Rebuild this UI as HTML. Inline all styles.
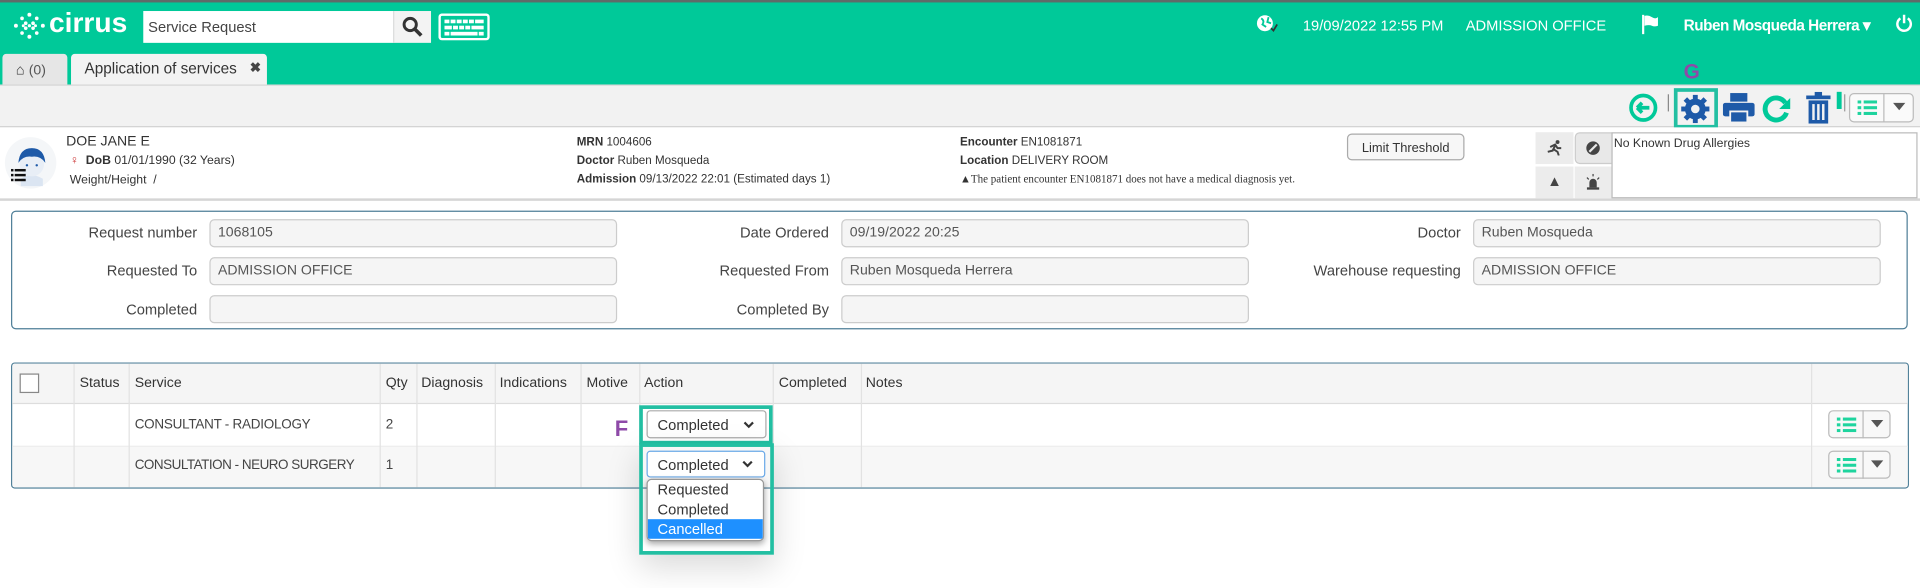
<!DOCTYPE html>
<html><head><meta charset="utf-8">
<style>
*{box-sizing:border-box;margin:0;padding:0}
html,body{width:1920px;height:588px;overflow:hidden;background:#fff}
#w{position:absolute;left:0;top:0;width:1568px;height:480px;transform:scale(1.22449);transform-origin:0 0;font-family:"Liberation Sans",sans-serif;font-size:12px;color:#333}
.a{position:absolute;white-space:nowrap}
.hdr{left:0;top:0;width:1568px;height:69px;background:#00c999;border-top:2px solid #5f6b68}
.wt{color:#fff}
.inp{background:#f5f5f5;border:1px solid #ccc;border-radius:4px;height:23px;padding:4px 6px;font-size:11.5px;color:#555}
.lbl{text-align:right;width:150px;font-size:12px;color:#444}
.col{position:absolute;top:0;height:100%;border-left:1px solid #e2e2e2}
.sel{background:#fff;border:1px solid #aaa;border-radius:3px;font-size:12px;color:#333;padding:4px 8px}
.rb{width:51px;height:23px;border:1px solid #bbb;border-radius:4px;background:#f8f8f8}
</style></head><body><div id="w">
<div class="a hdr"></div>
<svg class="a" style="left:11px;top:10px" width="26" height="22" viewBox="0 0 26 22" fill="#fff">
<circle cx="13" cy="2" r="1.6"/><circle cx="13" cy="20" r="1.6"/><circle cx="2" cy="11" r="1.6"/><circle cx="24" cy="11" r="1.6"/>
<circle cx="7" cy="5" r="1.5"/><circle cx="19" cy="5" r="1.5"/><circle cx="7" cy="17" r="1.5"/><circle cx="19" cy="17" r="1.5"/>
<circle cx="10" cy="9" r="1.5"/><circle cx="16" cy="9" r="1.5"/><circle cx="10" cy="13" r="1.5"/><circle cx="16" cy="13" r="1.5"/><circle cx="13" cy="11" r="1.3"/><circle cx="8" cy="11" r="1.2"/><circle cx="18" cy="11" r="1.2"/></svg>
<div class="a wt" style="left:40px;top:5px;font-size:23px;font-weight:bold">cirrus</div>
<div class="a" style="left:117px;top:9px;width:204px;height:26px;background:#fff;font-size:12px;padding:6px 4px;color:#444">Service Request</div>
<div class="a" style="left:321px;top:9px;width:31px;height:26px;background:#f3f3f3;border-left:1px solid #ddd"></div>
<svg class="a" style="left:328px;top:13px" width="18" height="18" viewBox="0 0 18 18"><circle cx="7" cy="7" r="5" fill="none" stroke="#333" stroke-width="2.4"/><path d="M11 11l5 5" stroke="#333" stroke-width="3"/></svg>
<svg class="a" style="left:358px;top:11px" width="42" height="22" viewBox="0 0 42 22"><rect x="1" y="1" width="40" height="20" rx="2" fill="none" stroke="#fff" stroke-width="2"/><g fill="#fff"><rect x="5" y="5" width="4" height="3"/><rect x="10" y="5" width="4" height="3"/><rect x="15" y="5" width="4" height="3"/><rect x="20" y="5" width="4" height="3"/><rect x="25" y="5" width="4" height="3"/><rect x="30" y="5" width="7" height="3"/><rect x="5" y="10" width="6" height="3"/><rect x="12" y="10" width="4" height="3"/><rect x="17" y="10" width="4" height="3"/><rect x="22" y="10" width="4" height="3"/><rect x="27" y="10" width="10" height="3"/><rect x="5" y="15" width="4" height="3"/><rect x="10" y="15" width="22" height="3"/><rect x="33" y="15" width="4" height="3"/></g></svg>
<svg class="a" style="left:1026px;top:12px" width="18" height="16" viewBox="0 0 18 16"><circle cx="7" cy="7" r="6.5" fill="#fff"/><path d="M4 3q3 2 1 5l3 2M10 2l-1 4 3 1" stroke="#00c999" stroke-width="1.5" fill="none"/><path d="M12 11l2 2 3-5" stroke="#333" stroke-width="1.4" fill="none"/></svg>
<div class="a wt" style="left:1064px;top:14px;font-size:12px">19/09/2022 12:55 PM</div>
<div class="a wt" style="left:1197px;top:14px;font-size:12px">ADMISSION OFFICE</div>
<svg class="a" style="left:1341px;top:12px" width="14" height="16" viewBox="0 0 14 16"><rect x="0" y="0" width="1.8" height="16" fill="#fff"/><path d="M2 1q3-1 6 1t5 0v7q-3 1-5 0t-6 0z" fill="#fff"/></svg>
<div class="a wt" style="left:1375px;top:13px;font-size:12.5px;font-weight:bold;letter-spacing:-0.4px">Ruben Mosqueda Herrera ▾</div>
<svg class="a" style="left:1548px;top:11px" width="14" height="16" viewBox="0 0 14 16"><path d="M4 4a5.5 5.5 0 1 0 6 0" fill="none" stroke="#fff" stroke-width="2"/><path d="M7 1v7" stroke="#fff" stroke-width="2"/></svg>
<div class="a" style="left:2px;top:44px;width:53px;height:25px;background:#e6e6e6;border-radius:3px 3px 0 0;padding:6px 0 0 11px;color:#555;font-size:11.5px"><span style="font-size:12px;color:#333">&#8962;</span> (0)</div>
<div class="a" style="left:58px;top:44px;width:160px;height:25px;background:#f3f3f3;border-radius:3px 3px 0 0;padding:5px 0 0 11px;color:#333;font-size:12.5px">Application of services<span style="position:absolute;left:146px;top:5px;font-size:11px;color:#444;font-weight:bold">✖</span></div>
<div class="a" style="left:0;top:69px;width:1568px;height:35px;background:#f2f2f2;border-top:1px solid #d5d5d5;border-bottom:1px solid #d0d0d0"></div>
<div class="a" style="left:1375px;top:49px;color:#8e4aa8;font-weight:bold;font-size:17px">G</div>
<svg class="a" style="left:1330px;top:76px" width="24" height="24" viewBox="0 0 24 24"><circle cx="12" cy="12" r="10" fill="none" stroke="#00c999" stroke-width="3"/><path d="M7 12h10M7 12l4-4M7 12l4 4" stroke="#00c999" stroke-width="3" fill="none"/></svg>
<div class="a" style="left:1362px;top:77px;width:1px;height:14px;background:#888"></div>
<div class="a" style="left:1367px;top:72px;width:36px;height:33px;border:3px solid #22bfa2"></div>
<svg class="a" style="left:1372px;top:77px" width="25" height="24" viewBox="0 0 24 24"><circle cx="12" cy="12" r="8.5" fill="#1e5aa8"/><g fill="#1e5aa8"><rect x="10" y="0.5" width="4" height="5"/><rect x="10" y="18.5" width="4" height="5"/><rect x="0.5" y="10" width="5" height="4"/><rect x="18.5" y="10" width="5" height="4"/><rect x="10" y="0.5" width="4" height="5" transform="rotate(45 12 12)"/><rect x="10" y="18.5" width="4" height="5" transform="rotate(45 12 12)"/><rect x="0.5" y="10" width="5" height="4" transform="rotate(45 12 12)"/><rect x="18.5" y="10" width="5" height="4" transform="rotate(45 12 12)"/></g><circle cx="12" cy="12" r="3.5" fill="#f2f2f2"/></svg>
<svg class="a" style="left:1407px;top:76px" width="26" height="24" viewBox="0 0 26 24"><rect x="6" y="0" width="14" height="7" fill="#1e5aa8"/><rect x="0" y="8" width="26" height="11" rx="2" fill="#1e5aa8"/><rect x="6" y="15" width="14" height="9" fill="#1e5aa8" stroke="#f2f2f2" stroke-width="1.5"/></svg>
<svg class="a" style="left:1439px;top:76px" width="24" height="25" viewBox="0 0 24 25"><path d="M19 8A9 9 0 1 0 20 16" fill="none" stroke="#00c999" stroke-width="4"/><path d="M14 13l9 0 0-9z" fill="#00c999"/></svg>
<svg class="a" style="left:1475px;top:75px" width="20" height="26" viewBox="0 0 20 26"><rect x="0" y="3" width="20" height="3" fill="#1e5aa8"/><rect x="7" y="0" width="6" height="3" fill="#1e5aa8"/><rect x="2" y="7" width="16" height="19" fill="#1e5aa8"/><g fill="#f2f2f2"><rect x="5" y="10" width="2" height="13"/><rect x="9" y="10" width="2" height="13"/><rect x="13" y="10" width="2" height="13"/></g></svg>
<div class="a" style="left:1500px;top:75px;width:4px;height:14px;background:#00c999"></div>
<div class="a" style="left:1506px;top:77px;width:1px;height:14px;background:#999"></div>
<div class="a rb" style="left:1510px;top:76px;width:53px;height:24px;background:#fafafa"></div>
<div class="a" style="left:1538px;top:76px;width:1px;height:24px;background:#bbb"></div>
<svg class="a" style="left:1517px;top:82px" width="16" height="12" viewBox="0 0 16 12" fill="#1ed49e"><rect x="0" y="0" width="3" height="2.5"/><rect x="5" y="0" width="11" height="2.5"/><rect x="0" y="4.7" width="3" height="2.5"/><rect x="5" y="4.7" width="11" height="2.5"/><rect x="0" y="9.4" width="3" height="2.5"/><rect x="5" y="9.4" width="11" height="2.5"/></svg>
<div class="a" style="left:1546px;top:84px;width:0;height:0;border:5px solid transparent;border-top:6px solid #555"></div>
<div class="a" style="left:0;top:104px;width:1568px;height:60px;background:#fff;border-bottom:2px solid #d5d5d5"></div>
<svg class="a" style="left:3px;top:108px" width="46" height="50" viewBox="0 0 46 50"><circle cx="22" cy="25" r="21" fill="#f4f6f8"/><path d="M14 38q8-6 18 0v6H14z" fill="#dbe5f2"/><circle cx="23" cy="26" r="10" fill="#e8eef6"/><path d="M12 25q1-12 11-12t11 12q-4-6-11-5q-7-1-11 5z" fill="#1e5aa8"/><circle cx="19" cy="27" r="1" fill="#1e5aa8"/><circle cx="27" cy="27" r="1" fill="#1e5aa8"/><g fill="#111"><rect x="6" y="30" width="2" height="2"/><rect x="9" y="30" width="9" height="2"/><rect x="6" y="34" width="2" height="2"/><rect x="9" y="34" width="9" height="2"/><rect x="6" y="38" width="2" height="2"/><rect x="9" y="38" width="9" height="2"/></g></svg>
<div class="a" style="left:54px;top:110px;font-size:11.5px;color:#333">DOE JANE E</div>
<div class="a" style="left:57px;top:126px;font-size:10px"><span style="color:#c33">♀</span>&nbsp; <b>DoB</b> 01/01/1990 (32 Years)</div>
<div class="a" style="left:57px;top:142px;font-size:10px">Weight/Height &nbsp;/</div>
<div class="a" style="left:471px;top:109px;font-size:9.5px;line-height:15px"><b>MRN</b> 1004606<br><b>Doctor</b> Ruben Mosqueda<br><b>Admission</b> 09/13/2022 22:01 (Estimated days 1)</div>
<div class="a" style="left:784px;top:109px;font-size:9.5px;line-height:15px"><b>Encounter</b> EN1081871<br><b>Location</b> DELIVERY ROOM<br><span style="font-family:'Liberation Serif',serif;font-size:9px">▲The patient encounter EN1081871 does not have a medical diagnosis yet.</span></div>
<div class="a" style="left:1100px;top:109px;width:96px;height:22px;border:1px solid #aaa;border-radius:4px;background:#f7f7f7;font-size:10.5px;text-align:center;padding-top:5px">Limit Threshold</div>
<div class="a" style="left:1254px;top:108px;width:31px;height:26px;background:#ececec"></div>
<svg class="a" style="left:1263px;top:114px" width="13" height="13" viewBox="0 0 13 13" fill="#444"><circle cx="9" cy="2" r="1.6"/><path d="M3 6l4-2 2 3 3 0M7 5l-2 4-4 1M6 8l3 2 1 3" stroke="#444" stroke-width="1.6" fill="none"/></svg>
<div class="a" style="left:1286px;top:108px;width:31px;height:26px;background:#e8e8e8;border:1px solid #ccc;border-radius:4px 0 0 4px"></div>
<svg class="a" style="left:1295px;top:115px" width="12" height="12" viewBox="0 0 12 12"><circle cx="6" cy="6" r="5.5" fill="#444"/><path d="M3 9L9 3" stroke="#e8e8e8" stroke-width="1.8"/></svg>
<div class="a" style="left:1254px;top:136px;width:31px;height:26px;background:#ececec;text-align:center;font-size:12px;padding-top:5px;color:#444">▲</div>
<div class="a" style="left:1286px;top:136px;width:31px;height:26px;background:#ececec"></div>
<svg class="a" style="left:1295px;top:142px" width="12" height="13" viewBox="0 0 12 13" fill="#444"><path d="M3 11V7a3 3 0 0 1 6 0v4z"/><rect x="1" y="11" width="10" height="2"/><path d="M6 0v2M1 3l1.5 1.5M11 3L9.5 4.5" stroke="#444" stroke-width="1"/></svg>
<div class="a" style="left:1316px;top:108px;width:250px;height:54px;border:1px solid #bbb;background:#fff;font-size:10px;padding:3px 1px">No Known Drug Allergies</div>
<div class="a" style="left:9px;top:172px;width:1549px;height:97px;border:1px solid #4f7f98;border-radius:4px"></div>
<div class="a lbl" style="left:11px;top:183px">Request number</div>
<div class="a inp" style="left:171px;top:179px;width:333px">1068105</div>
<div class="a lbl" style="left:11px;top:214px">Requested To</div>
<div class="a inp" style="left:171px;top:210px;width:333px">ADMISSION OFFICE</div>
<div class="a lbl" style="left:11px;top:246px">Completed</div>
<div class="a inp" style="left:171px;top:241px;width:333px"></div>
<div class="a lbl" style="left:527px;top:183px">Date Ordered</div>
<div class="a inp" style="left:687px;top:179px;width:333px">09/19/2022 20:25</div>
<div class="a lbl" style="left:527px;top:214px">Requested From</div>
<div class="a inp" style="left:687px;top:210px;width:333px">Ruben Mosqueda Herrera</div>
<div class="a lbl" style="left:527px;top:246px">Completed By</div>
<div class="a inp" style="left:687px;top:241px;width:333px"></div>
<div class="a lbl" style="left:1043px;top:183px">Doctor</div>
<div class="a inp" style="left:1203px;top:179px;width:333px">Ruben Mosqueda</div>
<div class="a lbl" style="left:1023px;top:214px;width:170px">Warehouse requesting</div>
<div class="a inp" style="left:1203px;top:210px;width:333px">ADMISSION OFFICE</div>
<div class="a" style="left:9px;top:296px;width:1550px;height:103px;border:1px solid #4f7f98;border-radius:3px;overflow:hidden">
 <div class="a" style="left:0;top:0;width:1550px;height:33px;background:#f5f5f5;border-bottom:1px solid #ddd"></div>
 <div class="a" style="left:0;top:67px;width:1550px;height:34px;background:#f7f7f7;border-top:1px solid #eee"></div>
 <div class="col" style="left:50px"></div><div class="col" style="left:95px"></div><div class="col" style="left:300px"></div><div class="col" style="left:330px"></div><div class="col" style="left:394px"></div><div class="col" style="left:464px"></div><div class="col" style="left:512px"></div><div class="col" style="left:621px"></div><div class="col" style="left:693px"></div><div class="col" style="left:1469px"></div>
 <div class="a" style="left:6px;top:8px;width:16px;height:16px;border:1px solid #888;background:#fff"></div>
 <div class="a" style="top:10px;left:0;font-size:11.5px;color:#333;width:1550px;height:20px">
  <span class="a" style="left:55px">Status</span><span class="a" style="left:100px">Service</span><span class="a" style="left:305px">Qty</span><span class="a" style="left:334px">Diagnosis</span><span class="a" style="left:398px">Indications</span><span class="a" style="left:469px">Motive</span><span class="a" style="left:516px">Action</span><span class="a" style="left:626px">Completed</span><span class="a" style="left:697px">Notes</span></div>
 <div class="a" style="left:100px;top:44px;font-size:11px;color:#444;letter-spacing:-0.2px">CONSULTANT - RADIOLOGY</div>
 <div class="a" style="left:305px;top:44px;font-size:11px;color:#444">2</div>
 <div class="a" style="left:100px;top:77px;font-size:11px;color:#444;letter-spacing:-0.4px">CONSULTATION - NEURO SURGERY</div>
 <div class="a" style="left:305px;top:77px;font-size:11px;color:#444">1</div>
 <div class="a rb" style="left:1483px;top:38px"></div><div class="a" style="left:1511px;top:38px;width:1px;height:23px;background:#bbb"></div>
 <div class="a rb" style="left:1483px;top:71px"></div><div class="a" style="left:1511px;top:71px;width:1px;height:23px;background:#bbb"></div>
 <svg class="a" style="left:1490px;top:44px" width="16" height="12" viewBox="0 0 16 12" fill="#1ed49e"><rect x="0" y="0" width="3" height="2.5"/><rect x="5" y="0" width="11" height="2.5"/><rect x="0" y="4.7" width="3" height="2.5"/><rect x="5" y="4.7" width="11" height="2.5"/><rect x="0" y="9.4" width="3" height="2.5"/><rect x="5" y="9.4" width="11" height="2.5"/></svg>
 <svg class="a" style="left:1490px;top:77px" width="16" height="12" viewBox="0 0 16 12" fill="#1ed49e"><rect x="0" y="0" width="3" height="2.5"/><rect x="5" y="0" width="11" height="2.5"/><rect x="0" y="4.7" width="3" height="2.5"/><rect x="5" y="4.7" width="11" height="2.5"/><rect x="0" y="9.4" width="3" height="2.5"/><rect x="5" y="9.4" width="11" height="2.5"/></svg>
 <div class="a" style="left:1518px;top:46px;border:5px solid transparent;border-top:6px solid #555"></div>
 <div class="a" style="left:1518px;top:79px;border:5px solid transparent;border-top:6px solid #555"></div>
</div>
<div class="a" style="left:502px;top:340px;color:#8e4aa8;font-weight:bold;font-size:18px">F</div>
<div class="a" style="left:522px;top:331px;width:109px;height:32px;border:3px solid #22bfa2"></div>
<div class="a sel" style="left:528px;top:335px;width:98px;height:23px">Completed<svg style="position:absolute;right:9px;top:8px" width="9" height="6" viewBox="0 0 9 6"><path d="M1 1l3.5 3.5L8 1" stroke="#333" stroke-width="1.8" fill="none"/></svg></div>
<div class="a" style="left:522px;top:362px;width:110px;height:91px;border:3px solid #22bfa2;box-shadow:0 10px 25px rgba(0,0,0,0.15)"></div>
<div class="a sel" style="left:528px;top:368px;width:97px;height:22px;border-color:#6aa9e8">Completed<svg style="position:absolute;right:9px;top:7px" width="9" height="6" viewBox="0 0 9 6"><path d="M1 1l3.5 3.5L8 1" stroke="#333" stroke-width="1.8" fill="none"/></svg></div>
<div class="a" style="left:528px;top:391px;width:96px;height:51px;background:#fff;border:1px solid #999;border-radius:4px;box-shadow:0 2px 5px rgba(0,0,0,0.35);overflow:hidden;font-size:12px;line-height:16px;color:#333">
 <div style="padding-left:8px">Requested</div><div style="padding-left:8px">Completed</div><div style="padding-left:8px;background:#1e90ff;color:#fff">Cancelled</div></div>
</div></body></html>
